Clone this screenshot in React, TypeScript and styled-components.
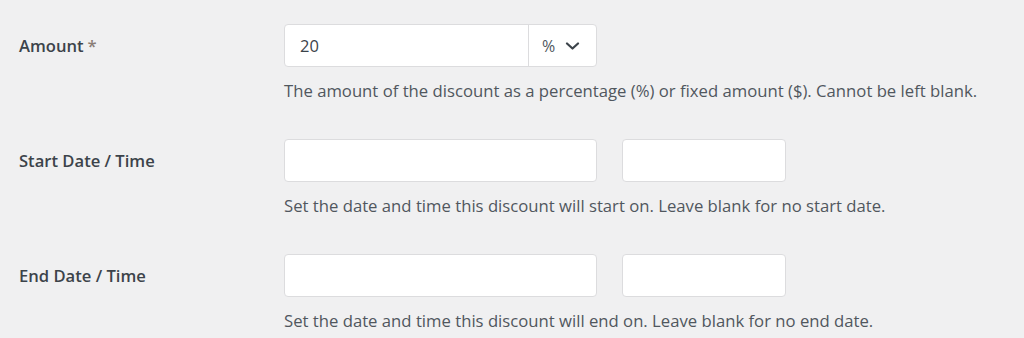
import React from "react";
import styled, { createGlobalStyle } from "styled-components";

const GlobalStyle = createGlobalStyle`
  html, body {
    margin: 0;
    padding: 0;
    background: #f0f0f1;
  }
  body {
    font-family: "Open Sans", "Noto Sans", sans-serif;
    color: #3c434a;
  }
`;

const Form = styled.div`
  display: flex;
  flex-direction: column;
  gap: 37px;
  padding: 24px 0 0 19px;
`;

const Row = styled.div`
  display: grid;
  grid-template-columns: 265px 1fr;
`;

const Label = styled.div`
  font-size: 16.6px;
  font-weight: 600;
  line-height: 43px;
  color: #3c434a;
`;

const Required = styled.span`
  color: #8a7e76;
  margin-left: 4px;
`;

const Field = styled.div`
  display: flex;
  flex-direction: column;
`;

const Inputs = styled.div`
  display: flex;
  gap: 25px;
  height: 43px;
`;

const TextBox = styled.div<{ $width: number }>`
  box-sizing: border-box;
  width: ${(p) => p.$width}px;
  height: 43px;
  background: #fff;
  border: 1px solid #dcdcde;
  border-radius: 4px;
  display: flex;
  align-items: center;
  padding-left: 15px;
  font-size: 16.5px;
  color: #3c434a;
`;

const Group = styled.div`
  box-sizing: border-box;
  width: 313px;
  height: 43px;
  background: #fff;
  border: 1px solid #dcdcde;
  border-radius: 4px;
  display: flex;
`;

const GroupValue = styled.div`
  flex: 1;
  display: flex;
  align-items: center;
  padding-left: 15px;
  font-size: 16.5px;
  color: #3c434a;
`;

const UnitSelect = styled.div`
  box-sizing: border-box;
  width: 68px;
  border-left: 1px solid #dcdcde;
  display: flex;
  align-items: center;
  padding-left: 13px;
  gap: 10px;
  font-size: 16px;
  color: #50575e;
`;

const Description = styled.p`
  margin: 13px 0 0;
  font-size: 16.7px;
  line-height: 22px;
  color: #50575e;
`;

const Chevron = () => (
  <svg width="15" height="8" viewBox="0 0 15 8" fill="none">
    <path d="M2 1.5 L7.5 6.5 L13 1.5" stroke="#3c434a" strokeWidth="2.2" strokeLinecap="round" strokeLinejoin="round" />
  </svg>
);

export default function App() {
  return (
    <>
      <GlobalStyle />
      <Form>
        <Row>
          <Label>
            Amount<Required>*</Required>
          </Label>
          <Field>
            <Inputs>
              <Group>
                <GroupValue>20</GroupValue>
                <UnitSelect>
                  %
                  <Chevron />
                </UnitSelect>
              </Group>
            </Inputs>
            <Description>
              The amount of the discount as a percentage (%) or fixed amount ($). Cannot be left blank.
            </Description>
          </Field>
        </Row>
        <Row>
          <Label>Start Date / Time</Label>
          <Field>
            <Inputs>
              <TextBox $width={313} />
              <TextBox $width={164} />
            </Inputs>
            <Description>
              Set the date and time this discount will start on. Leave blank for no start date.
            </Description>
          </Field>
        </Row>
        <Row>
          <Label>End Date / Time</Label>
          <Field>
            <Inputs>
              <TextBox $width={313} />
              <TextBox $width={164} />
            </Inputs>
            <Description>
              Set the date and time this discount will end on. Leave blank for no end date.
            </Description>
          </Field>
        </Row>
      </Form>
    </>
  );
}
